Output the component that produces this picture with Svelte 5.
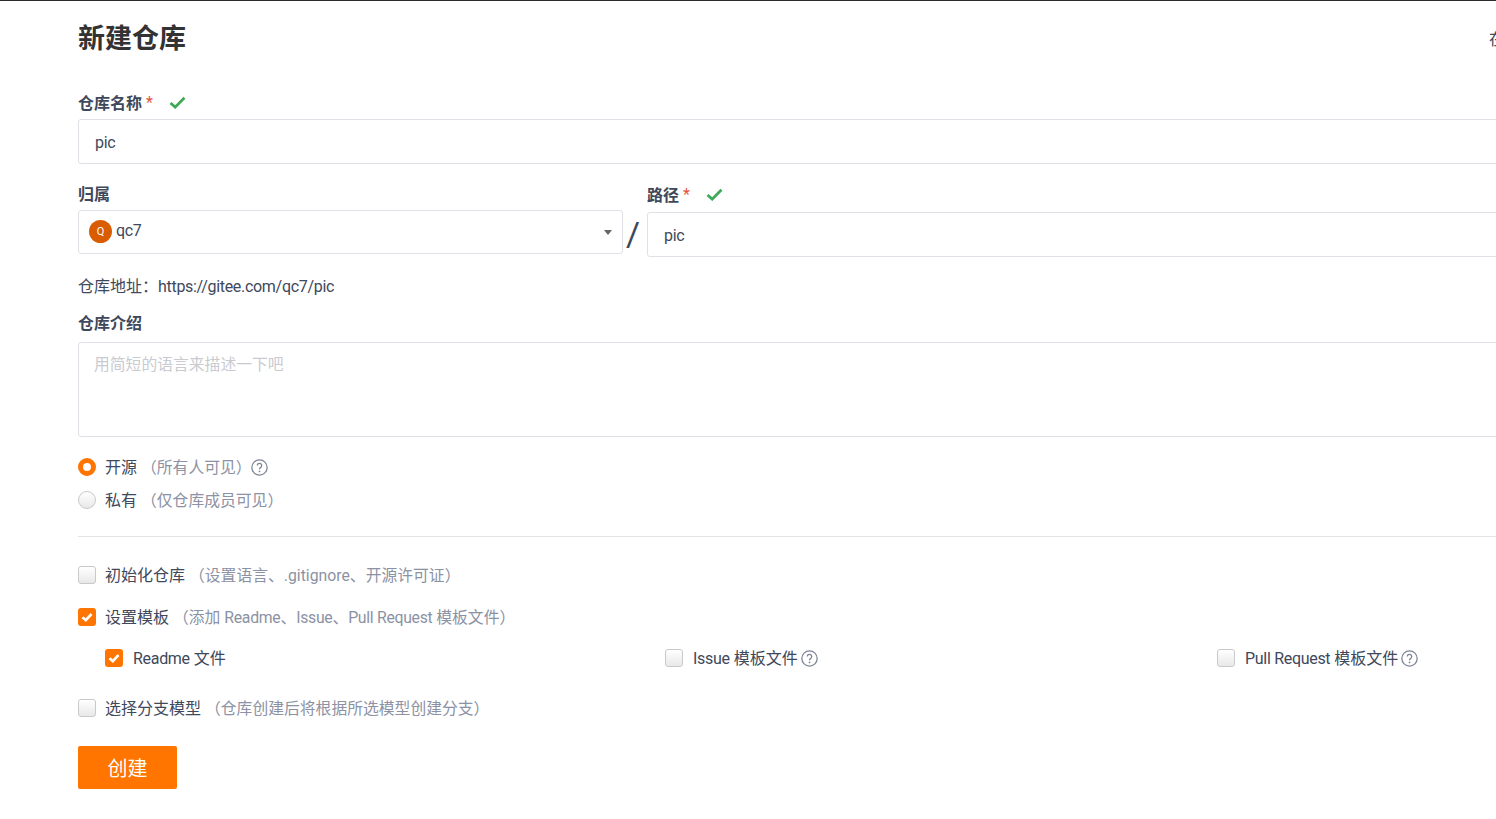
<script lang="ts">
  const templates = [
    { en: 'Readme', label: ' 文件', checked: true, help: false },
    { en: 'Issue', label: ' 模板文件', checked: false, help: true },
    { en: 'Pull Request', label: ' 模板文件', checked: false, help: true },
  ]
</script>

{#snippet help()}
  <svg class="help" viewBox="0 0 16 16" aria-hidden="true">
    <circle cx="8" cy="8" r="7.2" />
    <path d="M5.9 6.2a2.1 2.1 0 1 1 3.3 1.7c-.8.5-1.2.9-1.2 1.8" />
    <circle class="dot" cx="8" cy="11.7" r=".8" />
  </svg>
{/snippet}

{#snippet tick()}
  <svg class="tick" viewBox="0 0 18 14" aria-hidden="true">
    <path d="M1.5 7.5 6.5 12 16.5 2" />
  </svg>
{/snippet}

{#snippet checkbox(on: boolean)}
  <span class="box" class:on={on}>
    {#if on}
      <svg viewBox="0 0 18 18" aria-hidden="true"><path d="M4.5 9.2 7.8 12.2 13.5 6" /></svg>
    {/if}
  </span>
{/snippet}

<div class="page">
  <header class="head">
    <h1>新建仓库</h1>
    <span class="import">在其他网站已经有仓库了吗？</span>
  </header>

  <form class="form">
    <div class="label name-label">仓库名称 <i>*</i>{@render tick()}</div>
    <div class="input en">pic</div>

    <div class="split">
      <div class="owner">
        <div class="label">归属</div>
        <div class="select">
          <span class="avatar">Q</span>
          <span class="owner-name en">qc7</span>
          <span class="caret"></span>
        </div>
      </div>
      <span class="slash">/</span>
      <div class="path">
        <div class="label">路径 <i>*</i>{@render tick()}</div>
        <div class="input en">pic</div>
      </div>
    </div>

    <div class="address">仓库地址：<span class="en">https://gitee.com/qc7/pic</span></div>

    <div class="label intro-label">仓库介绍</div>
    <div class="textarea">用简短的语言来描述一下吧</div>

    <div class="radios">
      <div class="line">
        <span class="radio on"></span>
        <span class="text">开源</span>
        <span class="hint">（所有人可见）</span>
        {@render help()}
      </div>
      <div class="line">
        <span class="radio"></span>
        <span class="text">私有</span>
        <span class="hint">（仅仓库成员可见）</span>
      </div>
    </div>

    <hr />

    <div class="line check-a">
      {@render checkbox(false)}
      <span class="text">初始化仓库</span>
      <span class="hint">（设置语言、.gitignore、开源许可证）</span>
    </div>
    <div class="line check-b">
      {@render checkbox(true)}
      <span class="text">设置模板</span>
      <span class="hint">（添加 <span class="en">Readme</span>、<span class="en">Issue</span>、<span class="en">Pull Request</span> 模板文件）</span>
    </div>
    <div class="templates">
      {#each templates as t}
        <div class="line">
          {@render checkbox(t.checked)}
          <span class="text tpl"><span class="en">{t.en}</span>{t.label}</span>
          {#if t.help}{@render help()}{/if}
        </div>
      {/each}
    </div>
    <div class="line check-c">
      {@render checkbox(false)}
      <span class="text">选择分支模型</span>
      <span class="hint">（仓库创建后将根据所选模型创建分支）</span>
    </div>

    <button type="button" class="submit">创建</button>
  </form>
</div>

<style>
  :global(body) {
    background: #fff;
    overflow: hidden;
  }

  .page {
    width: 1496px;
    height: 819px;
    box-sizing: border-box;
    overflow: hidden;
    padding-left: 78px;
    border-top: 1px solid #2b2b2b;
    font-family: Roboto, "Noto Sans CJK SC", sans-serif;
    font-size: 16px;
    color: #40485b;
  }

  /* latin runs are a bit narrower than plain Roboto in the original */
  .en { letter-spacing: -0.3px; }

  .head {
    display: flex;
    align-items: center;
    width: 1680px;
    height: 74px;
  }
  h1 {
    margin: -4px 0 0;
    font-size: 27px;
    font-weight: 700;
    color: #333;
  }
  .import {
    margin-left: 1303px;
    white-space: nowrap;
    color: #40485b;
  }

  .form { width: 1680px; }

  .label {
    box-sizing: border-box;
    display: flex;
    align-items: center;
    height: 22px;
    padding-bottom: 2px;
    font-weight: 700;
    white-space: pre;
  }
  .label i {
    color: #e5533d;
    font-style: normal;
    font-weight: 400;
  }
  .tick {
    width: 17px;
    height: 13px;
    margin-left: 16px;
    fill: none;
    stroke: #3fa95a;
    stroke-width: 3;
  }
  .name-label { margin: 17px 0 5px; }

  .input {
    box-sizing: border-box;
    height: 45px;
    padding: 1px 16px 0;
    display: flex;
    align-items: center;
    border: 1px solid #dfe1e6;
    border-radius: 3px;
  }

  .split {
    display: flex;
    align-items: flex-end;
    margin-top: 19px;
  }
  .owner { width: 545px; }
  .owner .label { margin-bottom: 5px; }
  .select {
    box-sizing: border-box;
    height: 44px;
    margin-bottom: 3px;
    padding: 0 10px 2px 10px;
    display: flex;
    align-items: center;
    border: 1px solid #dfe1e6;
    border-radius: 3px;
  }
  .avatar {
    width: 23px;
    height: 23px;
    margin-right: 4px;
    border-radius: 50%;
    background: #d95c00;
    color: #fff;
    font-size: 11px;
    line-height: 23px;
    text-align: center;
  }
  .owner-name { margin-top: -2px; }
  .caret {
    margin: 2px 0 0 auto;
    border: 4px solid transparent;
    border-top: 5px solid #666;
    border-bottom: 0;
  }
  .slash {
    width: 20px;
    margin-right: 4px;
    height: 45px;
    text-align: center;
    font-size: 34px;
    line-height: 44px;
    font-weight: 400;
  }
  .path { flex: 1; }
  .path .label { margin-bottom: 6px; }

  .address { margin-top: 19px; line-height: 22px; }
  .intro-label { margin: 14px 0 8px; }

  .textarea {
    box-sizing: border-box;
    height: 95px;
    padding: 9px 15px;
    border: 1px solid #dfe1e6;
    border-radius: 3px;
    font-size: 15.8px;
    color: #c9cbd1;
  }

  .line {
    display: flex;
    align-items: center;
    height: 22px;
    white-space: pre;
  }
  .text { margin: -2px 0 0 9px; }
  .tpl { margin-left: 10px; }
  .hint {
    color: #8c92a4;
    font-size: 15.8px;
    margin: -2px 0 0 4px;
  }

  .radios {
    display: flex;
    flex-direction: column;
    gap: 11px;
    margin-top: 19px;
  }
  .radio {
    box-sizing: border-box;
    width: 18px;
    height: 18px;
    border: 1px solid #c8c9cc;
    border-radius: 50%;
    background: linear-gradient(#fff, #e8e8e8);
  }
  .radio.on {
    border: 5.5px solid #ff7500;
    background: #fff;
  }

  hr {
    margin: 25px 0 27px;
    border: 0;
    border-top: 1px solid #e3e4e8;
  }

  .box {
    box-sizing: border-box;
    width: 18px;
    height: 18px;
    border: 1px solid #c8c9cc;
    border-radius: 3px;
    background: linear-gradient(#fff, #e8e8e8);
  }
  .box.on {
    border: 0;
    background: #ff7500;
  }
  .box svg {
    display: block;
    fill: none;
    stroke: #fff;
    stroke-width: 2.6;
  }

  .check-b { margin-top: 20px; }
  .templates {
    display: grid;
    grid-template-columns: 560px 552px auto;
    margin: 19px 0 0 27px;
  }
  .check-c { margin-top: 28px; }

  .help {
    width: 17px;
    height: 17px;
    margin-left: 3px;
    fill: none;
    stroke: #7f8596;
    stroke-width: 1.2;
  }
  .hint + .help { margin-left: -1px; }
  .help .dot { fill: #7f8596; stroke: none; }

  .submit {
    display: block;
    width: 99px;
    height: 43px;
    margin-top: 27px;
    border: 0;
    border-radius: 2px;
    background: #ff7500;
    color: #fff;
    font: inherit;
    font-size: 20px;
  }
</style>
